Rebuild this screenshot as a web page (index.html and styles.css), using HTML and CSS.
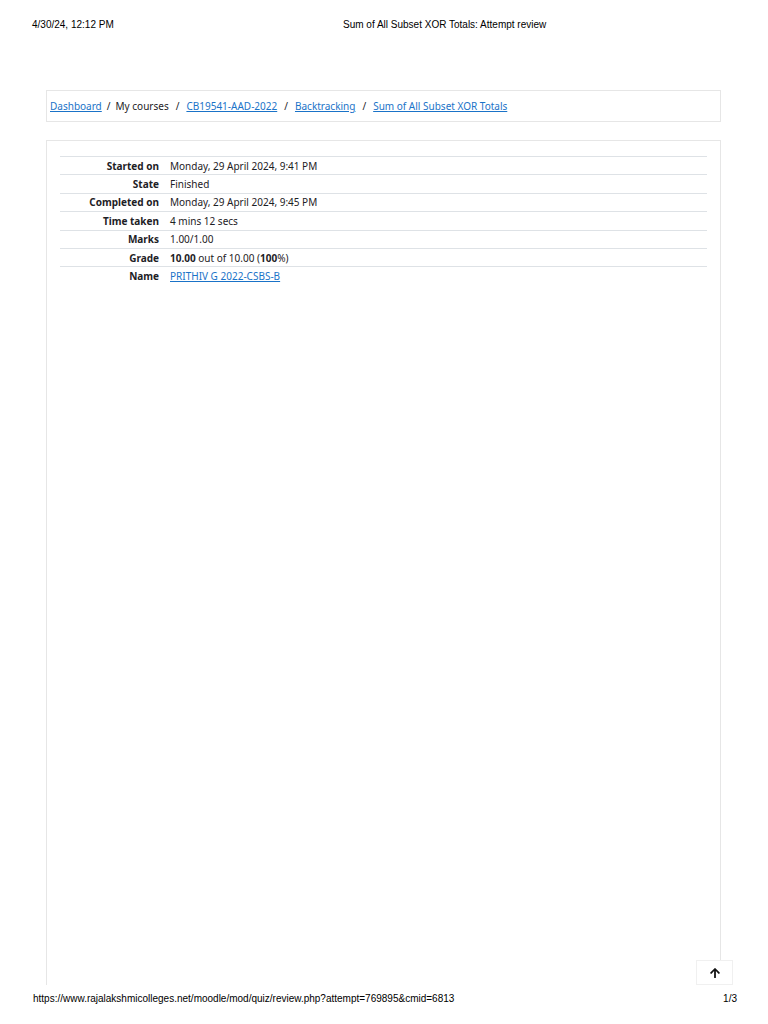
FILE: index.html
```html
<!DOCTYPE html>
<html lang="en">
<head>
<meta charset="utf-8">
<title>Sum of All Subset XOR Totals: Attempt review</title>
<link rel="stylesheet" href="styles.css">
</head>
<body>
<div class="page">
  <header class="print-header">
    <span class="print-date">4/30/24, 12:12 PM</span>
    <span class="print-title">Sum of All Subset XOR Totals: Attempt review</span>
  </header>
  <main class="content">
    <nav class="breadcrumb">
      <a href="#">Dashboard</a><span class="sep sep-first">/</span><span>My courses</span><span class="sep">/</span><a href="#">CB19541-AAD-2022</a><span class="sep">/</span><a href="#">Backtracking</a><span class="sep">/</span><a href="#">Sum of All Subset XOR Totals</a>
    </nav>
    <section class="card">
      <table class="summary">
        <tr><th>Started on</th><td>Monday, 29 April 2024, 9:41 PM</td></tr>
        <tr><th>State</th><td>Finished</td></tr>
        <tr><th>Completed on</th><td>Monday, 29 April 2024, 9:45 PM</td></tr>
        <tr><th>Time taken</th><td>4 mins 12 secs</td></tr>
        <tr><th>Marks</th><td>1.00/1.00</td></tr>
        <tr><th>Grade</th><td><b>10.00</b> out of 10.00 (<b>100</b>%)</td></tr>
        <tr><th>Name</th><td><a href="#">PRITHIV G 2022-CSBS-B</a></td></tr>
      </table>
      <a class="back-to-top" href="#" aria-label="Back to top">
        <svg viewBox="0 0 448 512" width="10" height="12"><path d="M34.9 289.5l-22.2-22.2c-9.4-9.4-9.4-24.6 0-33.9L207 39c9.4-9.4 24.6-9.4 33.9 0l194.3 194.3c9.4 9.4 9.4 24.6 0 33.9L413 289.4c-9.5 9.5-25 9.3-34.3-.4L264 168.6V456c0 13.3-10.7 24-24 24h-32c-13.3 0-24-10.7-24-24V168.6L69.2 289.1c-9.3 9.8-24.8 10-34.3.4z" fill="#111"/></svg>
      </a>
    </section>
  </main>
  <footer class="print-footer">
    <span>https://www.rajalakshmicolleges.net/moodle/mod/quiz/review.php?attempt=769895&amp;cmid=6813</span>
    <span>1/3</span>
  </footer>
</div>
</body>
</html>
```
FILE: styles.css
```css
html, body {
  margin: 0;
  padding: 0;
  background: #fff;
}

.page {
  display: flex;
  flex-direction: column;
  height: 1024px;
  overflow: hidden;
}

.print-header {
  height: 90px;
  box-sizing: border-box;
  padding: 18px 33px 0 32px;
  display: flex;
  font-family: "Liberation Sans", Arial, sans-serif;
  font-size: 10px;
  line-height: 13px;
  color: #000;
}

.print-date {
  width: 311px;
  flex: none;
}

.content {
  flex: 1;
  display: flex;
  flex-direction: column;
  gap: 18px;
  padding: 0 47px 0 46px;
  font-family: "Noto Sans", "Open Sans", sans-serif;
  font-size: 10px;
  color: #1d2125;
  min-height: 0;
}

.breadcrumb {
  border: 1px solid #e6e6e6;
  padding: 8px 3px 8px;
  line-height: 14px;
}

.breadcrumb a {
  color: #1a73c8;
  text-decoration: underline;
}

.breadcrumb .sep {
  padding: 0 7px;
  color: #1d2125;
}

.breadcrumb .sep-first {
  padding: 0 5px;
}

.card {
  flex: 1;
  position: relative;
  border: 1px solid #e6e6e6;
  border-bottom: none;
  padding: 15px 13px 14px;
}

.summary {
  width: 100%;
  border-collapse: collapse;
}

.summary th,
.summary td {
  border-top: 1px solid #dee2e6;
  padding: 2.5px 0 1.5px;
  line-height: 13.4px;
  vertical-align: top;
}

.summary th {
  width: 99px;
  text-align: right;
  font-weight: 700;
  padding-right: 11px;
  white-space: nowrap;
}

.summary td {
  text-align: left;
}

.summary a {
  color: #1a73c8;
  text-decoration: underline;
}

.back-to-top {
  position: absolute;
  right: -13px;
  bottom: 0;
  width: 35px;
  height: 23px;
  background: #fff;
  border: 1px solid #f0f0f0;
  display: flex;
  align-items: center;
  justify-content: center;
}

.print-footer {
  height: 39px;
  box-sizing: border-box;
  padding: 7px 31px 0 33px;
  display: flex;
  justify-content: space-between;
  font-family: "Liberation Sans", Arial, sans-serif;
  font-size: 10px;
  line-height: 14px;
  color: #000;
}
```
